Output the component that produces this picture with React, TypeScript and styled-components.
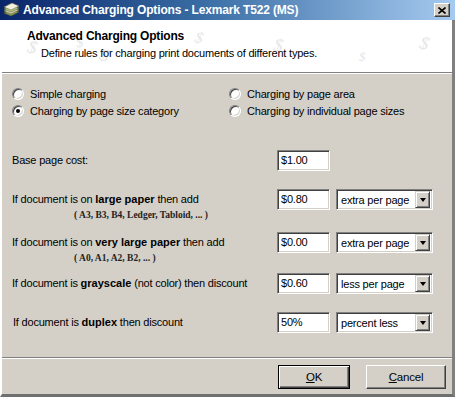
import React from 'react';
import styled, { createGlobalStyle } from 'styled-components';

const Global = createGlobalStyle`
  html, body { margin: 0; padding: 0; background: #d4d0c8; }
  body { font-family: "Liberation Sans", Arial, sans-serif; font-size: 11px; letter-spacing: -0.2px; color: #000; }
  * { box-sizing: border-box; }
`;

const Window = styled.div`
  width: 455px;
  height: 397px;
  display: flex;
  flex-direction: column;
  background: #d4d0c8;
  overflow: hidden;
`;

const TitleBar = styled.div`
  height: 20px;
  flex: none;
  display: flex;
  align-items: center;
  padding: 0 5px 0 3px;
  background: linear-gradient(to right, #0a246a 0%, #3a6ea5 45%, #a6caf0 100%);
`;

const TitleText = styled.div`
  flex: 1;
  margin-left: 3px;
  color: #fff;
  font-weight: bold;
  font-size: 12px;
  letter-spacing: -0.15px;
  white-space: nowrap;
`;

const CloseButton = styled.div`
  width: 16px;
  height: 14px;
  background: #d4d0c8;
  border: 1px solid;
  border-color: #fff #404040 #404040 #fff;
  box-shadow: inset -1px -1px #808080;
  display: flex;
  align-items: center;
  justify-content: center;
`;

const Frame = styled.div`
  flex: 1;
  display: flex;
  flex-direction: column;
  border-left: 2px solid #fff;
  border-right: 3px solid #808080;
  border-bottom: 3px solid #6f6f6f;
`;

const Header = styled.div`
  position: relative;
  height: 54px;
  flex: none;
  background: #fff;
  padding: 9px 0 0 25px;
  border-bottom: 1px solid #fff;
  box-shadow: 0 -1px 0 #808080 inset;
  overflow: hidden;
`;

const HeaderTitle = styled.div`
  position: relative;
  font-weight: bold;
  font-size: 12px;
  line-height: 15px;
  letter-spacing: -0.2px;
`;

const HeaderSub = styled.div`
  position: relative;
  margin: 2px 0 0 14px;
  line-height: 14px;
`;

const Watermark = styled.span<{ $x: number; $y: number; $r: number; $s: number }>`
  position: absolute;
  left: ${p => p.$x}px;
  top: ${p => p.$y}px;
  font-family: "Liberation Serif", serif;
  font-style: italic;
  font-size: ${p => p.$s}px;
  line-height: 1;
  color: #e6e6e6;
  transform: rotate(${p => p.$r}deg);
  pointer-events: none;
`;

const RadioGroup = styled.div`
  display: grid;
  grid-template-columns: 217px 1fr;
  grid-auto-rows: 17px;
  padding: 11px 0 0 10px;
`;

const RadioItem = styled.label`
  display: flex;
  align-items: center;
  gap: 6px;
  white-space: nowrap;
`;

const RadioCircle = styled.span<{ $checked?: boolean }>`
  position: relative;
  width: 12px;
  height: 12px;
  border-radius: 50%;
  background: #fff;
  border: 1px solid;
  border-color: #808080 #fff #fff #808080;
  box-shadow: inset 1px 1px #404040, inset -1px -1px #d4d0c8;
  &::after {
    content: '';
    display: ${p => (p.$checked ? 'block' : 'none')};
    position: absolute;
    left: 3px;
    top: 3px;
    width: 4px;
    height: 4px;
    border-radius: 50%;
    background: #000;
  }
`;

const Form = styled.div`
  margin-top: 31px;
  padding-left: 10px;
`;

const Row = styled.div<{ $mb: number }>`
  display: grid;
  grid-template-columns: 259px 53px 97px;
  column-gap: 6px;
  align-items: start;
  margin-bottom: ${p => p.$mb}px;
`;

const Label = styled.div<{ $indent?: number }>`
  line-height: 21px;
  padding-left: ${p => p.$indent || 0}px;
  white-space: nowrap;
  b { letter-spacing: 0; }
`;

const SubNote = styled.div`
  font-family: "Liberation Serif", "Times New Roman", serif;
  font-weight: bold;
  font-size: 9.5px;
  letter-spacing: 0;
  line-height: 11px;
  padding-left: 62px;
  color: #222;
`;

const sunken = `
  background: #fff;
  border: 1px solid;
  border-color: #808080 #fff #fff #808080;
  box-shadow: inset 1px 1px #404040, inset -1px -1px #d4d0c8;
`;

const TextBox = styled.div`
  ${sunken}
  height: 21px;
  line-height: 19px;
  padding-left: 3px;
  font-size: 11px;
`;

const Select = styled.div`
  ${sunken}
  height: 21px;
  display: flex;
  align-items: center;
  padding: 2px 2px 2px 4px;
  font-size: 11px;
`;

const SelectText = styled.span`
  flex: 1;
`;

const ArrowButton = styled.span`
  width: 15px;
  height: 17px;
  background: #d4d0c8;
  border: 1px solid;
  border-color: #d4d0c8 #404040 #404040 #d4d0c8;
  box-shadow: inset 1px 1px #fff, inset -1px -1px #808080;
  display: flex;
  align-items: center;
  justify-content: center;
  &::after {
    content: '';
    border-left: 3.5px solid transparent;
    border-right: 3.5px solid transparent;
    border-top: 4px solid #000;
  }
`;

const Footer = styled.div`
  margin-top: 24px;
  border-top: 1px solid #808080;
  box-shadow: inset 0 1px 0 #fff;
  display: flex;
  justify-content: flex-end;
  gap: 16px;
  padding: 7px 6px 0 0;
`;

const Button = styled.button<{ $default?: boolean; $w: number }>`
  width: ${p => p.$w}px;
  height: 24px;
  font-family: inherit;
  font-size: 11.5px;
  letter-spacing: -0.2px;
  background: #d4d0c8;
  color: #000;
  padding: 0;
  border: 1px solid;
  border-color: ${p => (p.$default ? '#000' : '#fff #404040 #404040 #fff')};
  box-shadow: ${p =>
    p.$default
      ? 'inset 1px 1px #fff, inset -1px -1px #404040, inset -2px -2px #808080'
      : 'inset -1px -1px #808080'};
`;

const StackIcon = () => (
  <svg width="17" height="16" viewBox="0 0 17 16">
    <polygon points="1,11 8,14 16,10 9,7" fill="#8a9a5b" stroke="#4a5a2a" strokeWidth="0.6" />
    <polygon points="1,9 8,12 16,8 9,5" fill="#d8d0a8" stroke="#6a6a4a" strokeWidth="0.6" />
    <polygon points="1,7 8,10 16,6 9,3" fill="#b8c890" stroke="#5a6a3a" strokeWidth="0.6" />
    <polygon points="1,5 8,8 16,4 9,1" fill="#f4f0e0" stroke="#6a6a4a" strokeWidth="0.6" />
  </svg>
);

const CloseX = () => (
  <svg width="8" height="7" viewBox="0 0 8 7">
    <path d="M0.5 0.5 L7.5 6.5 M7.5 0.5 L0.5 6.5" stroke="#000" strokeWidth="1.6" />
  </svg>
);

const marks = [
  { x: 26, y: 18, r: 15, s: 18 },
  { x: 74, y: 16, r: -10, s: 14 },
  { x: 98, y: 26, r: 20, s: 18 },
  { x: 193, y: 10, r: 15, s: 16 },
  { x: 272, y: 16, r: 10, s: 18 },
  { x: 357, y: 30, r: 0, s: 13 },
  { x: 418, y: 14, r: 15, s: 18 },
];

const App = () => (
  <>
    <Global />
    <Window>
      <TitleBar>
        <StackIcon />
        <TitleText>Advanced Charging Options - Lexmark T522 (MS)</TitleText>
        <CloseButton><CloseX /></CloseButton>
      </TitleBar>
      <Frame>
        <Header>
          {marks.map((m, i) => (
            <Watermark key={i} $x={m.x} $y={m.y} $r={m.r} $s={m.s}>$</Watermark>
          ))}
          <HeaderTitle>Advanced Charging Options</HeaderTitle>
          <HeaderSub>Define rules for charging print documents of different types.</HeaderSub>
        </Header>

        <RadioGroup>
          <RadioItem><RadioCircle />Simple charging</RadioItem>
          <RadioItem><RadioCircle />Charging by page area</RadioItem>
          <RadioItem><RadioCircle $checked />Charging by page size category</RadioItem>
          <RadioItem><RadioCircle />Charging by individual page sizes</RadioItem>
        </RadioGroup>

        <Form>
          <Row $mb={18}>
            <Label>Base page cost:</Label>
            <TextBox>$1.00</TextBox>
          </Row>
          <Row $mb={11}>
            <div>
              <Label>If document is on <b>large paper</b> then add</Label>
              <SubNote>( A3, B3, B4, Ledger, Tabloid, ... )</SubNote>
            </div>
            <TextBox>$0.80</TextBox>
            <Select><SelectText>extra per page</SelectText><ArrowButton /></Select>
          </Row>
          <Row $mb={9}>
            <div>
              <Label>If document is on <b>very large paper</b> then add</Label>
              <SubNote>( A0, A1, A2, B2, ... )</SubNote>
            </div>
            <TextBox>$0.00</TextBox>
            <Select><SelectText>extra per page</SelectText><ArrowButton /></Select>
          </Row>
          <Row $mb={18}>
            <Label>If document is <b>grayscale</b> (not color) then discount</Label>
            <TextBox>$0.60</TextBox>
            <Select><SelectText>less per page</SelectText><ArrowButton /></Select>
          </Row>
          <Row $mb={0}>
            <Label $indent={1}>If document is <b>duplex</b> then discount</Label>
            <TextBox>50%</TextBox>
            <Select><SelectText>percent less</SelectText><ArrowButton /></Select>
          </Row>
        </Form>

        <Footer>
          <Button $default $w={72}><u>O</u>K</Button>
          <Button $w={80}><u>C</u>ancel</Button>
        </Footer>
      </Frame>
    </Window>
  </>
);

export default App;
